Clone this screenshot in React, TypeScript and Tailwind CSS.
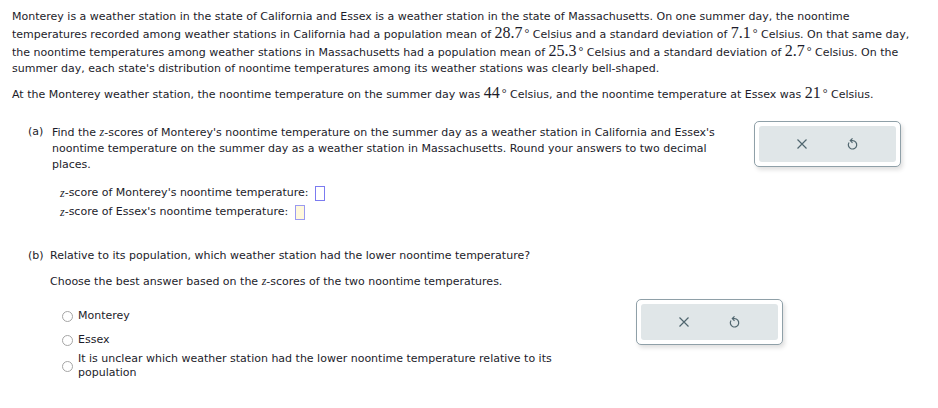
import React from "react"

const text = "text-[#1c1c2a]"

function M({ children }: { children: React.ReactNode }) {
  return <span className="font-['Liberation_Serif',serif] text-[16px] leading-none">{children}</span>
}

function Deg({ v }: { v: string }) {
  return (
    <M>
      {v}
      <sup className="text-[12px] relative -top-[1px] ml-[2px]">°</sup>
    </M>
  )
}

function Z() {
  return <span className="font-['Liberation_Serif',serif] italic text-[12px]">z</span>
}

function ActionBox() {
  return (
    <div className="w-[147px] h-[46px] rounded-[5px] border border-[#8fa0a8] bg-white p-[4px] shadow-[2px_3px_4px_rgba(0,0,0,0.12)]">
      <div className="h-full rounded-[3px] bg-[#e0e6e8] flex items-center justify-around px-[18px]">
        <svg width="12" height="12" viewBox="0 0 12 12" className="text-[#50666f]">
          <path d="M1.5 1.5 L10.5 10.5 M10.5 1.5 L1.5 10.5" stroke="currentColor" strokeWidth="1.2" fill="none" />
        </svg>
        <svg width="13" height="14" viewBox="0 0 13 14" className="text-[#50666f]">
          <path d="M3 5.5 A4.2 4.2 0 1 0 6.5 3.6 L5 3.6" stroke="currentColor" strokeWidth="1.2" fill="none" />
          <path d="M6.5 1.3 L4.3 3.6 L6.5 5.8" stroke="currentColor" strokeWidth="1.2" fill="none" />
        </svg>
      </div>
    </div>
  )
}

function Dot() {
  return <span className="w-[11px] h-[11px] rounded-full border border-[#a5a5a5] bg-white shrink-0" />
}

export default function App() {
  return (
    <div className={`min-h-screen bg-white font-['DejaVu_Sans',sans-serif] text-[11px] leading-[16px] ${text} pl-[12px] pr-[18px] pt-[9px]`}>
      <p>
        Monterey is a weather station in the state of California and Essex is a weather station in the state of
        Massachusetts. On one summer day, the noontime temperatures recorded among weather stations in California had a
        population mean of <Deg v="28.7" /> Celsius and a standard deviation of <Deg v="7.1" /> Celsius. On that same day,
        the noontime temperatures among weather stations in Massachusetts had a population mean of <Deg v="25.3" />{" "}
        Celsius and a standard deviation of <Deg v="2.7" /> Celsius. On the summer day, each state's distribution of
        noontime temperatures among its weather stations was clearly bell-shaped.
      </p>
      <p className="mt-[8px]">
        At the Monterey weather station, the noontime temperature on the summer day was <Deg v="44" /> Celsius, and the
        noontime temperature at Essex was <Deg v="21" /> Celsius.
      </p>

      {/* part a */}
      <div className="mt-[21px] pl-[16px] flex">
        <div className="w-[24px] shrink-0">(a)</div>
        <div className="flex-1">
          <div className="flex">
            <p className="w-[680px]">
              Find the <Z />-scores of Monterey's noontime temperature on the summer day as a weather station in California
              and Essex's noontime temperature on the summer day as a weather station in Massachusetts. Round your answers
              to two decimal places.
            </p>
            <div className="ml-[22px] -mt-[3px]">
              <ActionBox />
            </div>
          </div>
          <div className="mt-[12px] pl-[8px] flex flex-col gap-[3px]">
            <div className="flex items-center">
              <Z />
              <span>-score of Monterey's noontime temperature:&nbsp;&nbsp;</span>
              <span className="inline-block w-[10px] h-[15px] border border-[#7b7bf0] bg-white" />
            </div>
            <div className="flex items-center">
              <Z />
              <span>-score of Essex's noontime temperature:&nbsp;&nbsp;</span>
              <span className="inline-block w-[10px] h-[15px] border border-[#9a9af0] bg-[#fff8dc]" />
            </div>
          </div>
        </div>
      </div>

      {/* part b */}
      <div className="mt-[28px] pl-[16px] flex">
        <div className="w-[22px] shrink-0">(b)</div>
        <div className="flex-1">
          <p>Relative to its population, which weather station had the lower noontime temperature?</p>
          <p className="mt-[9px]">
            Choose the best answer based on the <Z />-scores of the two noontime temperatures.
          </p>
          <div className="flex">
            <div className="w-[560px] mt-[18px] pl-[12px] flex flex-col gap-[8px]">
              <div className="flex items-center gap-[5px]">
                <Dot />
                <span>Monterey</span>
              </div>
              <div className="flex items-center gap-[5px]">
                <Dot />
                <span>Essex</span>
              </div>
              <div className="flex items-center gap-[5px] -mt-[4px]">
                <Dot />
                <span className="leading-[14px]">
                  It is unclear which weather station had the lower noontime temperature relative to its
                  <br />
                  population
                </span>
              </div>
            </div>
            <div className="ml-[26px] mt-[9px]">
              <ActionBox />
            </div>
          </div>
        </div>
      </div>
    </div>
  )
}
